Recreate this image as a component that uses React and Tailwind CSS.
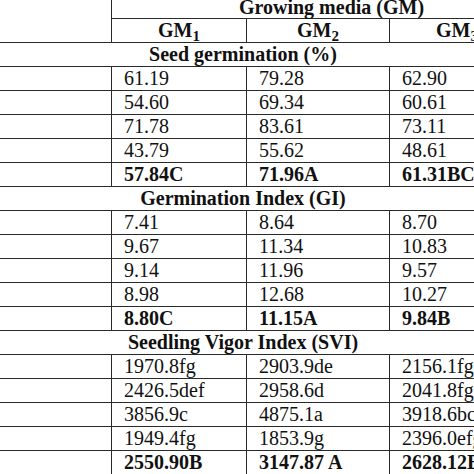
const sections = [
  {
    title: "Seed germination (%)",
    rows: [
      ["61.19", "79.28", "62.90"],
      ["54.60", "69.34", "60.61"],
      ["71.78", "83.61", "73.11"],
      ["43.79", "55.62", "48.61"],
    ],
    mean: ["57.84C", "71.96A", "61.31BC"],
  },
  {
    title: "Germination Index (GI)",
    rows: [
      ["7.41", "8.64", "8.70"],
      ["9.67", "11.34", "10.83"],
      ["9.14", "11.96", "9.57"],
      ["8.98", "12.68", "10.27"],
    ],
    mean: ["8.80C", "11.15A", "9.84B"],
  },
  {
    title: "Seedling Vigor Index (SVI)",
    rows: [
      ["1970.8fg", "2903.9de", "2156.1fg"],
      ["2426.5def", "2958.6d", "2041.8fg"],
      ["3856.9c", "4875.1a", "3918.6bc"],
      ["1949.4fg", "1853.9g", "2396.0efg"],
    ],
    mean: ["2550.90B", "3147.87 A", "2628.12B"],
  },
];

function DataRow({ values, bold }) {
  return (
    <div className="grid grid-cols-[112px_135px_143px_170px] h-[24px] border-b border-[#2a2a2a]">
      <div className="border-r border-[#2a2a2a]" />
      {values.map((v, i) => (
        <div
          key={i}
          className={`pl-3 leading-[23px] whitespace-nowrap ${i < 2 ? "border-r border-[#2a2a2a]" : ""} ${bold ? "font-bold" : ""}`}
        >
          {v}
        </div>
      ))}
    </div>
  );
}

function SectionRow({ title }) {
  return (
    <div className="h-[24px] border-b border-[#2a2a2a]">
      <div className="w-[486px] text-center font-bold leading-[23px] whitespace-nowrap">{title}</div>
    </div>
  );
}

function GM({ n }) {
  return (
    <span>
      GM<sub>{n}</sub>
    </span>
  );
}

export default function App() {
  return (
    <div className="w-[474px] h-[474px] overflow-hidden bg-white text-[#111] text-[20px] font-[family-name:Liberation_Serif,Times_New_Roman,serif]">
      <div className="w-[560px]">
        {/* header */}
        <div className="grid grid-cols-[112px_448px] border-b border-[#2a2a2a]">
          <div className="border-r border-[#2a2a2a]" />
          <div>
            <div className="h-[19px] border-b border-[#2a2a2a]">
              <div className="w-[439px] text-center font-bold leading-[15px] whitespace-nowrap">
                Growing media (GM)
              </div>
            </div>
            <div className="grid grid-cols-[135px_143px_170px] h-[23px] font-bold">
              <div className="border-r border-[#2a2a2a] text-center leading-[23px]"><GM n={1} /></div>
              <div className="border-r border-[#2a2a2a] text-center leading-[23px]"><GM n={2} /></div>
              <div className="w-[134px] text-center leading-[23px]"><GM n={3} /></div>
            </div>
          </div>
        </div>

        {sections.map((s) => (
          <div key={s.title}>
            <SectionRow title={s.title} />
            {s.rows.map((r, i) => (
              <DataRow key={i} values={r} />
            ))}
            <DataRow values={s.mean} bold />
          </div>
        ))}
      </div>
    </div>
  );
}
